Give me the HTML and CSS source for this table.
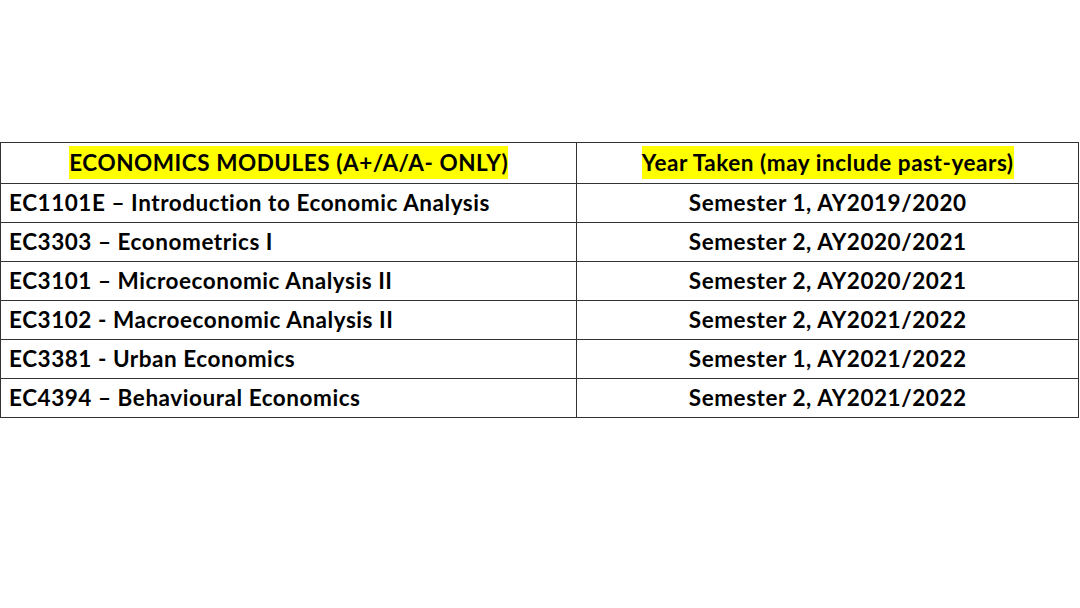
FILE: index.html
```html
<!DOCTYPE html>
<html>
<head>
<meta charset="utf-8">
<link rel="stylesheet" href="styles.css">
</head>
<body>
<div class="page">
  <table class="mods">
    <colgroup><col class="c1"><col class="c2"></colgroup>
    <tr class="head">
      <th><span class="hl">ECONOMICS MODULES (A+/A/A- ONLY)</span></th>
      <th><span class="hl">Year Taken (may include past-years)</span></th>
    </tr>
    <tr><td>EC1101E – Introduction to Economic Analysis</td><td class="yr">Semester 1, AY2019/2020</td></tr>
    <tr><td>EC3303 – Econometrics I</td><td class="yr">Semester 2, AY2020/2021</td></tr>
    <tr><td>EC3101 – Microeconomic Analysis II</td><td class="yr">Semester 2, AY2020/2021</td></tr>
    <tr><td>EC3102 - Macroeconomic Analysis II</td><td class="yr">Semester 2, AY2021/2022</td></tr>
    <tr><td>EC3381 - Urban Economics</td><td class="yr">Semester 1, AY2021/2022</td></tr>
    <tr><td>EC4394 – Behavioural Economics</td><td class="yr">Semester 2, AY2021/2022</td></tr>
  </table>
</div>
</body>
</html>
```
FILE: styles.css
```css
html, body {
  margin: 0;
  padding: 0;
  background: #ffffff;
}
.page {
  width: 1080px;
  height: 608px;
  padding-top: 142px;
  box-sizing: border-box;
}
.mods {
  border-collapse: collapse;
  width: 1079px;
  margin-left: 0;
  font-family: "Lato", "Open Sans", sans-serif;
  font-weight: 700;
  font-size: 22.5px;
  letter-spacing: 0.55px;
  color: #000;
}
.c1 { width: 577px; }
.c2 { width: 502px; }
.mods th, .mods td {
  border: 1.5px solid #333;
  height: 39px;
  padding: 0 8px;
  box-sizing: border-box;
  line-height: 24px;
}
.mods th {
  text-align: center;
  font-weight: 700;
  height: 41px;
}
.mods td { text-align: left; }
.mods td.yr { text-align: center; }
.hl {
  background: #ffff00;
  padding: 3px 0;
}
```
